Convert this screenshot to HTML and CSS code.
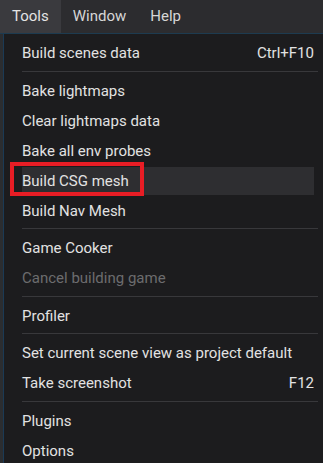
FILE: index.html
```html
<!DOCTYPE html>
<html>
<head>
<meta charset="utf-8">
<link rel="stylesheet" href="styles.css">
</head>
<body>
<div class="screen">
  <div class="menubar">
    <div class="menubar-item active">Tools</div>
    <div class="menubar-item">Window</div>
    <div class="menubar-item">Help</div>
  </div>
  <div class="stage">
    <div class="scene"></div>
    <div class="menu">
      <div class="item"><span>Build scenes data</span><span class="shortcut">Ctrl+F10</span></div>
      <div class="sep"></div>
      <div class="item"><span>Bake lightmaps</span></div>
      <div class="item"><span>Clear lightmaps data</span></div>
      <div class="item"><span>Bake all env probes</span></div>
      <div class="item hover"><span>Build CSG mesh</span></div>
      <div class="item"><span>Build Nav Mesh</span></div>
      <div class="sep"></div>
      <div class="item"><span>Game Cooker</span></div>
      <div class="item disabled"><span>Cancel building game</span></div>
      <div class="sep"></div>
      <div class="item"><span>Profiler</span></div>
      <div class="sep"></div>
      <div class="item"><span>Set current scene view as project default</span></div>
      <div class="item"><span>Take screenshot</span><span class="shortcut">F12</span></div>
      <div class="sep"></div>
      <div class="item"><span>Plugins</span></div>
      <div class="item"><span>Options</span></div>
    </div>
    <div class="annotation"></div>
  </div>
</div>
</body>
</html>
```
FILE: styles.css
```css
html, body {
  margin: 0;
  padding: 0;
  background: #1c1c1e;
}
.screen {
  width: 323px;
  height: 463px;
  overflow: hidden;
  font-family: Roboto, "Liberation Sans", sans-serif;
  font-size: 15px;
  color: #e2e2e2;
}
.menubar {
  display: flex;
  height: 33px;
  background: #2c2c2f;
  border-bottom: 1px solid #1d3b50;
}
.menubar-item {
  padding: 0 12px;
  line-height: 33px;
  color: #d6d6d6;
}
.menubar-item.active {
  background: #3a3a3e;
  color: #e4e4e4;
}
.stage {
  position: relative;
  display: flex;
  height: 429px;
}
.scene {
  width: 3px;
  flex: none;
  background: #2b2d30;
}
.menu {
  flex: 1;
  background: #1c1c1e;
  border-left: 1px solid #1b3a55;
  padding-top: 4px;
  display: flex;
  flex-direction: column;
}
.item {
  display: flex;
  justify-content: space-between;
  height: 30px;
  line-height: 30px;
  margin: 0 3px 0 1px;
  padding: 0 6px 0 17px;
  white-space: nowrap;
}
.item.hover {
  background: #2e2e31;
  background-clip: content-box;
  padding-top: 1px;
  padding-bottom: 1px;
  height: 28px;
  line-height: 28px;
}
.item.disabled {
  color: #6c6c6e;
}
.sep {
  height: 1px;
  margin: 2.5px 5px 4px 18px;
  background: #38383b;
  flex: none;
}
.annotation {
  position: absolute;
  left: 10px;
  top: 128px;
  width: 126px;
  height: 26px;
  border: 4px solid #e81d25;
}
```
